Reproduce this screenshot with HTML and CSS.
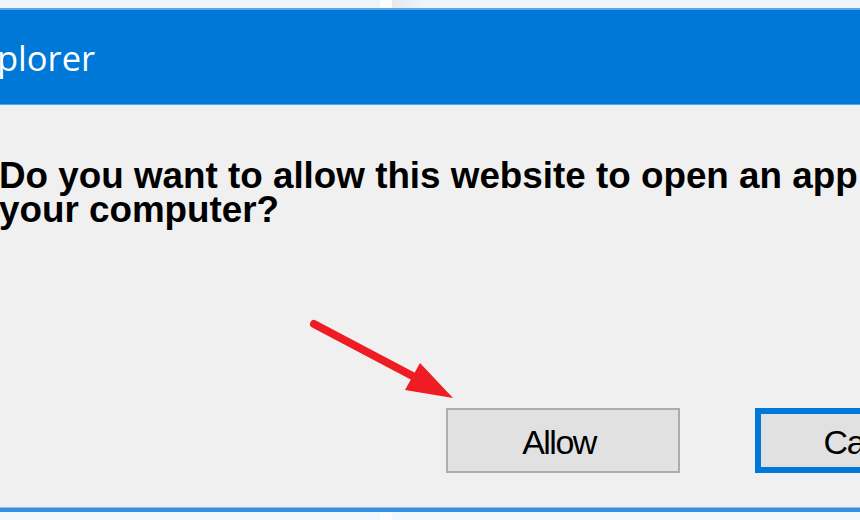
FILE: index.html
```html
<!DOCTYPE html>
<html lang="en">
<head>
<meta charset="utf-8">
<title>Allow website to open app</title>
<link rel="stylesheet" href="styles.css">
</head>
<body>
  <div class="page">
    <div class="strip strip-top">
      <div class="strip-fill"></div>
      <div class="strip-white"></div>
      <div class="strip-grey"></div>
    </div>
    <div class="dialog">
      <div class="titlebar">
        <span class="title">plorer</span>
      </div>
      <div class="body">
        <p class="message">Do you want to allow this website to open an app on<br>your computer?</p>
        <div class="actions">
          <button class="btn">Allow</button>
          <button class="btn btn-focus">Cancel</button>
        </div>
      </div>
      <div class="bottom-edge"></div>
    </div>
    <div class="strip strip-bottom">
      <div class="strip-fill"></div>
      <div class="strip-white"></div>
      <div class="strip-fill2"></div>
    </div>
    <svg class="arrow" width="860" height="520" viewBox="0 0 860 520" aria-hidden="true">
      <line x1="314" y1="324" x2="422" y2="381" stroke="#ee1d23" stroke-width="8" stroke-linecap="round"/>
      <polygon points="420,363 405,390 453,398" fill="#ee1d23"/>
    </svg>
  </div>
</body>
</html>
```
FILE: styles.css
```css
html, body {
  margin: 0;
  padding: 0;
}
body {
  width: 860px;
  height: 520px;
  overflow: hidden;
  background: #f0f0f0;
}
.page {
  position: relative;
  width: 860px;
  height: 520px;
  overflow: hidden;
  display: flex;
  flex-direction: column;
}
.strip {
  display: flex;
  flex: none;
}
.strip-top {
  height: 8px;
}
.strip-fill {
  width: 380px;
  background: #edf4fc;
}
.strip-white {
  width: 12px;
  background: #fbfdff;
}
.strip-grey {
  flex: 1;
  background: linear-gradient(90deg, #e6e9ee 0px, #edf4fc 30px);
}
.strip-fill2 {
  flex: 1;
  background: #f3f8fe;
}
.dialog {
  flex: 1;
  display: flex;
  flex-direction: column;
}
.titlebar {
  height: 94px;
  background: #0078d7;
  border-top: 2px solid #5aa5e8;
  border-bottom: 1px solid #5aa5e8;
  display: flex;
  align-items: center;
  flex: none;
}
.title {
  color: #ffffff;
  font-family: "Open Sans", "Noto Sans", sans-serif;
  font-size: 34.5px;
  margin-left: -3px;
  margin-top: 0;
}
.body {
  flex: 1;
  background: #f0f0f0;
  padding-top: 54px;
}
.message {
  margin: 0 0 0 -1px;
  white-space: nowrap;
  font-family: "Liberation Sans", Arial, sans-serif;
  font-weight: bold;
  font-size: 36.8px;
  line-height: 34px;
  color: #000000;
}
.actions {
  display: flex;
  gap: 75px;
  margin-top: 181px;
  margin-left: 446px;
}
.btn {
  flex: none;
  width: 234px;
  height: 65px;
  box-sizing: border-box;
  background: #e1e1e1;
  border: 2px solid #adadad;
  font-family: "Liberation Sans", Arial, sans-serif;
  font-size: 34px;
  letter-spacing: -1.5px;
  color: #000000;
  padding: 4px 8px 0 0;
  margin: 0;
}
.btn-focus {
  border: 6px solid #0078d7;
  padding: 4px 0 0 0;
}
.bottom-edge {
  height: 4px;
  background: #3a90e0;
  border-top: 1px solid #8cc0ef;
  flex: none;
}
.strip-bottom {
  height: 8px;
}
.strip-bottom .strip-fill {
  background: #f3f8fe;
}
.arrow {
  position: absolute;
  left: 0;
  top: 0;
  pointer-events: none;
}
```
